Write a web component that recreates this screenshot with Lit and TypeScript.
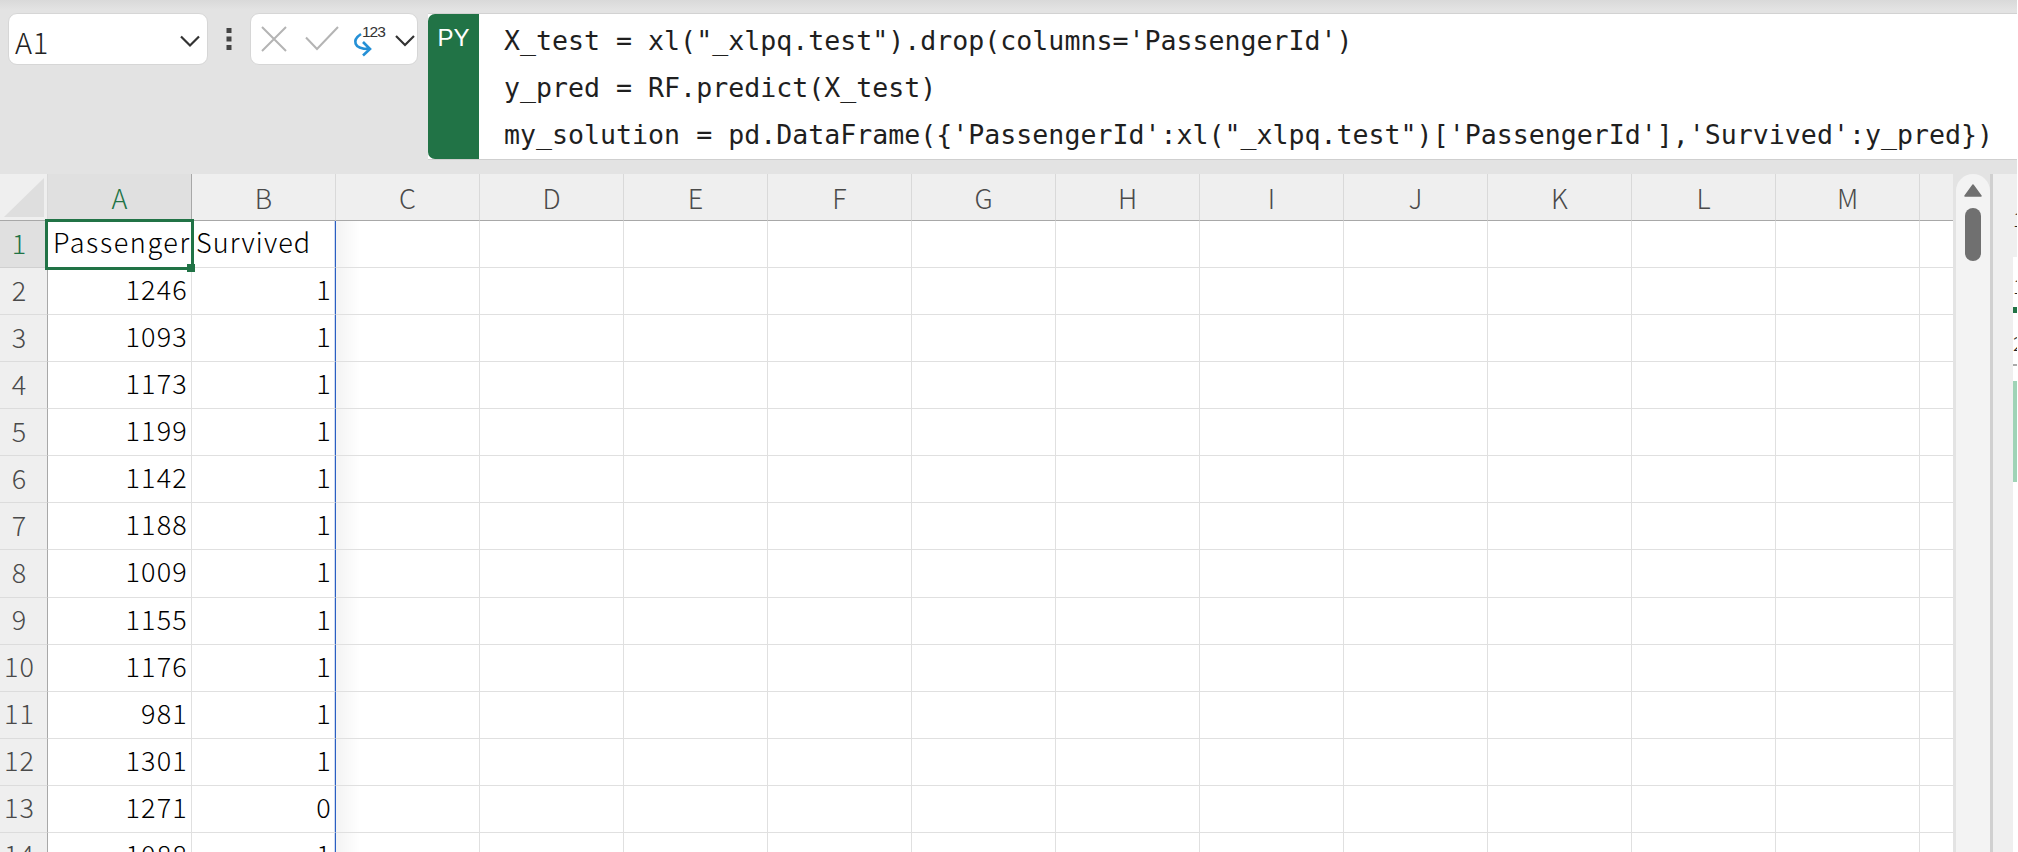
import { LitElement, html, css, svg } from "lit";
import { customElement } from "lit/decorators.js";

const COLS = ["A","B","C","D","E","F","G","H","I","J","K","L","M",""];
const ROWS: [string,string][] = [
  ["1246","1"],["1093","1"],["1173","1"],["1199","1"],["1142","1"],["1188","1"],
  ["1009","1"],["1155","1"],["1176","1"],["981","1"],["1301","1"],["1271","0"],["1088","1"],
];

@customElement("app-root")
export class AppRoot extends LitElement {
  static styles = css`
    :host { display: block; width: 2018px; height: 852px; overflow: hidden; background: #fff; font-family: "Noto Sans CJK JP", "Noto Sans", sans-serif; font-weight: 300; }
    .app { width: 2017px; height: 852px; background: #e3e3e3; }
    .bar { height: 174px; box-sizing: border-box; padding: 13px 0 0 8px; display: flex; align-items: flex-start; background: linear-gradient(#d9d9d9, #e3e3e3 10px); }
    .name { width: 200px; height: 52px; box-sizing: border-box; background: #fff; border: 1px solid #d6d6d6; border-radius: 9px; display: flex; align-items: center; justify-content: space-between; padding: 3px 6px 0 6px; font-size: 29px; letter-spacing: 0.8px; color: #222; }
    .kebab { width: 42px; height: 52px; display: flex; align-items: center; justify-content: center; }
    .tools { width: 168px; height: 52px; box-sizing: border-box; background: #fff; border: 1px solid #d6d6d6; border-radius: 9px; }
    .tools svg { display: block; }
    .formula { flex: 1; margin-left: 10px; height: 147px; box-sizing: border-box; background: #fff; border-top: 1px solid #d2d2d2; border-bottom: 1px solid #cfcfcf; display: flex; }
    .py { width: 51px; background: #217346; color: #fff; border-radius: 7px 0 0 7px; text-align: center; font-family: "Liberation Sans", sans-serif; font-size: 24px; line-height: 26px; padding-top: 11px; box-sizing: border-box; }
    .code { margin-left: 25px; padding-top: 3px; font-family: "DejaVu Sans Mono", monospace; font-size: 26.6px; line-height: 47px; color: #1f1f1f; white-space: pre; }
    .main { display: flex; height: 678px; }
    .sheet { width: 1953px; overflow: hidden; flex: none; }
    .grid { display: grid; grid-template-columns: 48px repeat(14, 144px); grid-auto-rows: 47.07px; grid-template-rows: 47px; }
    .corner { background: #efefef; border-right: 1px solid #d9d9d9; border-bottom: 1px solid #a8a8a8; box-sizing: border-box; display: flex; align-items: flex-end; justify-content: flex-end; padding: 0 3px 3px 0; }
    .ch { background: #efefef; border-right: 1px solid #d9d9d9; border-bottom: 1px solid #a8a8a8; box-sizing: border-box; display: flex; align-items: center; justify-content: center; font-size: 27px; color: #4a4a4a; }
    .ch.sel { background: #e0e0e0; color: #217346; border-right-color: #a8a8a8; }
    .rh { background: #efefef; border-right: 1px solid #a8a8a8; border-bottom: 1px solid #dcdcdc; box-sizing: border-box; display: flex; align-items: center; justify-content: center; padding: 0 8px 4px 0; font-size: 27px; letter-spacing: 1px; color: #4a4a4a; }
    .rh.sel { background: #e0e0e0; color: #217346; border-bottom-color: #d0d0d0; }
    .c { position: relative; background: #fff; border-right: 1px solid #e0e0e0; border-bottom: 1px solid #e0e0e0; box-sizing: border-box; font-size: 27px; line-height: 41px; padding: 0 5px; color: #000; overflow: hidden; white-space: nowrap; }
    .c.n { text-align: right; padding-right: 3px; letter-spacing: 1.2px; }
    .c.t { padding: 0 0 0 4px; letter-spacing: 1.1px; }
    .c.edge { border-right: 1px solid #2a5fc2; box-shadow: inset -1px 0 0 #cdd9f0; }
    .c.shade { background: linear-gradient(90deg, #f3f3f3, #fff 24px); }
    .c.a1 { overflow: visible; z-index: 2; padding: 0 0 0 5px; letter-spacing: 1.6px; }
    .c.a1 .clip { display: block; overflow: hidden; width: 137px; }
    .select { position: absolute; left: -3px; top: -2px; right: -3px; bottom: -3px; border: 3px solid #217346; pointer-events: none; }
    .handle { position: absolute; right: -4px; bottom: -5px; width: 8px; height: 8px; background: #217346; }
    .gap { width: 3px; flex: none; }
    .scroll { width: 34px; flex: none; background: #f3f3f3; border-radius: 17px 17px 0 0; box-sizing: border-box; padding-top: 10px; display: flex; flex-direction: column; align-items: center; gap: 11px; }
    .thumb { width: 16px; height: 53px; border-radius: 8px; background: #707070; }
    .divider { width: 3px; flex: none; background: #d0d0d0; }
    .side { flex: 1; background: #efefef; display: flex; position: relative; }
    .side .pad { width: 20px; flex: none; }
    .mini { flex: 1; margin-top: 83px; background: #fff; display: flex; flex-direction: column; }
    .mini .m1 { height: 6px; margin-top: 50px; background: #217346; }
    .mini .m2 { height: 2px; margin-top: 51px; background: #aaa; }
    .mini .m3 { height: 101px; margin-top: 15px; background: #9fd3b6; }
    .peek { position: absolute; left: 20px; width: 4px; height: 30px; overflow: hidden; font-size: 20px; line-height: 30px; color: #222; }
    .p1 { top: 30px; }
    .p2 { top: 97px; }
    .p3 { top: 154px; }
  `;

  private chevron() {
    return html`<svg width="22" height="14" viewBox="0 0 22 14"><path d="M2 2.5 L11 11.5 L20 2.5" fill="none" stroke="#333" stroke-width="2.2"/></svg>`;
  }

  render() {
    return html`<div class="app">
      <div class="bar">
        <div class="name"><span>A1</span>${this.chevron()}</div>
        <div class="kebab"><svg width="6" height="22" viewBox="0 0 6 22"><rect x="0.5" y="0" width="5" height="5" fill="#444"/><rect x="0.5" y="8.500" width="5" height="5" fill="#444"/><rect x="0.5" y="17" width="5" height="5" fill="#444"/></svg></div>
        <div class="tools"><svg width="166" height="50" viewBox="0 0 166 50">
          ${svg`<path d="M11 13 L35 37 M35 13 L11 37" stroke="#b4b4b4" stroke-width="2" fill="none"/>
          <path d="M55 23.500 L66 35 L87 13" stroke="#b4b4b4" stroke-width="2" fill="none"/>
          <path d="M110 20 C 101 26 102 35 118 35 M112 28 L119 35 L112 41.500" stroke="#2490d6" stroke-width="2.600" fill="none"/>
          <text x="111" y="23" font-family="Liberation Sans, sans-serif" font-size="15.500" letter-spacing="-1" fill="#333">123</text>
          <path d="M145 22 L154 31 L163 22" stroke="#333" stroke-width="2.200" fill="none"/>`}
        </svg></div>
        <div class="formula">
          <div class="py">PY</div>
          <div class="code">X_test = xl("_xlpq.test").drop(columns='PassengerId')
y_pred = RF.predict(X_test)
my_solution = pd.DataFrame({'PassengerId':xl("_xlpq.test")['PassengerId'],'Survived':y_pred})</div>
        </div>
      </div>
      <div class="main">
        <div class="sheet"><div class="grid">
          <div class="corner"><svg width="40" height="39" viewBox="0 0 40 39"><path d="M40 0 V39 H0 Z" fill="#dedede"/></svg></div>
          ${COLS.map((c, i) => html`<div class="ch ${i === 0 ? "sel" : ""}">${c}</div>`)}
          <div class="rh sel">1</div>
          <div class="c a1"><span class="clip">Passenger</span><div class="select"></div><div class="handle"></div></div>
          <div class="c t edge">Survived</div>
          ${COLS.slice(2).map((_, i) => html`<div class="c ${i === 0 ? "shade" : ""}"></div>`)}
          ${ROWS.map((r, i) => html`
            <div class="rh">${i + 2}</div>
            <div class="c n">${r[0]}</div>
            <div class="c n edge">${r[1]}</div>
            ${COLS.slice(2).map((_, j) => html`<div class="c ${j === 0 ? "shade" : ""}"></div>`)}
          `)}
        </div></div>
        <div class="gap"></div>
        <div class="scroll">
          <svg width="18" height="13" viewBox="0 0 18 13"><path d="M9 1 L17 12 H1 Z" fill="#707070" stroke="#707070" stroke-width="1.500" stroke-linejoin="round"/></svg>
          <div class="thumb"></div>
        </div>
        <div class="divider"></div>
        <div class="side">
          <div class="pad"></div>
          <div class="mini"><div class="m1"></div><div class="m2"></div><div class="m3"></div></div>
          <div class="peek p1">1</div><div class="peek p2">1</div><div class="peek p3">2</div>
        </div>
      </div>
    </div>`;
  }
}
